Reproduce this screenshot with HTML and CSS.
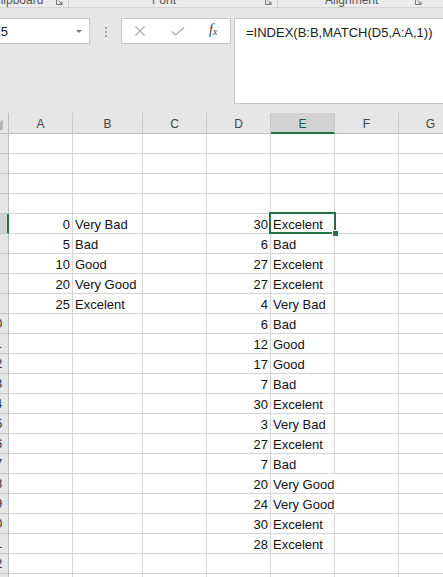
FILE: index.html
```html
<!DOCTYPE html>
<html>
<head>
<meta charset="utf-8">
<link rel="stylesheet" href="styles.css">
</head>
<body>
<div class="ribbon">
  <div class="rgroup g1"><span class="rlabel">Clipboard</span><svg class="launch" width="7" height="7" viewBox="0 0 7 7"><path d="M0.5 0.5V6.5H6.5M2.5 2.5L6 6M6 3.5V6H3.5" fill="none" stroke="#777" stroke-width="1"/></svg></div>
  <div class="rgroup g2"><span class="rlabel">Font</span><svg class="launch" width="7" height="7" viewBox="0 0 7 7"><path d="M0.5 0.5V6.5H6.5M2.5 2.5L6 6M6 3.5V6H3.5" fill="none" stroke="#777" stroke-width="1"/></svg></div>
  <div class="rgroup g3"><span class="rlabel">Alignment</span><svg class="launch" width="7" height="7" viewBox="0 0 7 7"><path d="M0.5 0.5V6.5H6.5M2.5 2.5L6 6M6 3.5V6H3.5" fill="none" stroke="#777" stroke-width="1"/></svg></div>
</div>
<div class="fbar">
  <div class="namebox"><span class="nbtext">E5</span><span class="nbarrow"></span></div>
  <div class="grip"><i></i><i></i><i></i></div>
  <div class="fbtns">
    <svg class="ico" width="12" height="10" viewBox="0 0 12 10"><path d="M1.5 0.5L10.5 9.5M10.5 0.5L1.5 9.5" stroke="#b4b4b4" stroke-width="1.3" fill="none"/></svg>
    <svg class="ico" width="14" height="9" viewBox="0 0 14 9"><path d="M1 4.5L4.5 8L13 0.5" stroke="#b4b4b4" stroke-width="1.4" fill="none"/></svg>
    <span class="fx">f<sub>x</sub></span>
  </div>
  <div class="finput">=INDEX(B:B,MATCH(D5,A:A,1))</div>
</div>
<div class="sheet">
  <div class="corner"><span class="tri"></span></div><div class="ch">A</div><div class="ch">B</div><div class="ch">C</div><div class="ch">D</div><div class="ch selh">E</div><div class="ch">F</div><div class="ch">G</div>

  <div class="rh">1</div><div class="c"></div><div class="c"></div><div class="c"></div><div class="c"></div><div class="c"></div><div class="c"></div><div class="c"></div>
  <div class="rh">2</div><div class="c"></div><div class="c"></div><div class="c"></div><div class="c"></div><div class="c"></div><div class="c"></div><div class="c"></div>
  <div class="rh">3</div><div class="c"></div><div class="c"></div><div class="c"></div><div class="c"></div><div class="c"></div><div class="c"></div><div class="c"></div>
  <div class="rh">4</div><div class="c"></div><div class="c"></div><div class="c"></div><div class="c"></div><div class="c"></div><div class="c"></div><div class="c"></div>
  <div class="rh selr">5</div><div class="c n">0</div><div class="c">Very Bad</div><div class="c"></div><div class="c n">30</div><div class="c active">Excelent<span class="selbox"><span class="handle"></span></span></div><div class="c"></div><div class="c"></div>
  <div class="rh">6</div><div class="c n">5</div><div class="c">Bad</div><div class="c"></div><div class="c n">6</div><div class="c">Bad</div><div class="c"></div><div class="c"></div>
  <div class="rh">7</div><div class="c n">10</div><div class="c">Good</div><div class="c"></div><div class="c n">27</div><div class="c">Excelent</div><div class="c"></div><div class="c"></div>
  <div class="rh">8</div><div class="c n">20</div><div class="c">Very Good</div><div class="c"></div><div class="c n">27</div><div class="c">Excelent</div><div class="c"></div><div class="c"></div>
  <div class="rh">9</div><div class="c n">25</div><div class="c">Excelent</div><div class="c"></div><div class="c n">4</div><div class="c">Very Bad</div><div class="c"></div><div class="c"></div>
  <div class="rh">10</div><div class="c"></div><div class="c"></div><div class="c"></div><div class="c n">6</div><div class="c">Bad</div><div class="c"></div><div class="c"></div>
  <div class="rh">11</div><div class="c"></div><div class="c"></div><div class="c"></div><div class="c n">12</div><div class="c">Good</div><div class="c"></div><div class="c"></div>
  <div class="rh">12</div><div class="c"></div><div class="c"></div><div class="c"></div><div class="c n">17</div><div class="c">Good</div><div class="c"></div><div class="c"></div>
  <div class="rh">13</div><div class="c"></div><div class="c"></div><div class="c"></div><div class="c n">7</div><div class="c">Bad</div><div class="c"></div><div class="c"></div>
  <div class="rh">14</div><div class="c"></div><div class="c"></div><div class="c"></div><div class="c n">30</div><div class="c">Excelent</div><div class="c"></div><div class="c"></div>
  <div class="rh">15</div><div class="c"></div><div class="c"></div><div class="c"></div><div class="c n">3</div><div class="c">Very Bad</div><div class="c"></div><div class="c"></div>
  <div class="rh">16</div><div class="c"></div><div class="c"></div><div class="c"></div><div class="c n">27</div><div class="c">Excelent</div><div class="c"></div><div class="c"></div>
  <div class="rh">17</div><div class="c"></div><div class="c"></div><div class="c"></div><div class="c n">7</div><div class="c">Bad</div><div class="c"></div><div class="c"></div>
  <div class="rh">18</div><div class="c"></div><div class="c"></div><div class="c"></div><div class="c n">20</div><div class="c spill">Very Good</div><div class="c"></div><div class="c"></div>
  <div class="rh">19</div><div class="c"></div><div class="c"></div><div class="c"></div><div class="c n">24</div><div class="c spill">Very Good</div><div class="c"></div><div class="c"></div>
  <div class="rh">20</div><div class="c"></div><div class="c"></div><div class="c"></div><div class="c n">30</div><div class="c">Excelent</div><div class="c"></div><div class="c"></div>
  <div class="rh">21</div><div class="c"></div><div class="c"></div><div class="c"></div><div class="c n">28</div><div class="c">Excelent</div><div class="c"></div><div class="c"></div>
  <div class="rh">22</div><div class="c"></div><div class="c"></div><div class="c"></div><div class="c"></div><div class="c"></div><div class="c"></div><div class="c"></div>
  <div class="rh">23</div><div class="c"></div><div class="c"></div><div class="c"></div><div class="c"></div><div class="c"></div><div class="c"></div><div class="c"></div>
</div>
</body>
</html>
```
FILE: styles.css
```css
html, body {
  margin: 0;
  padding: 0;
  background: #ffffff;
  overflow: hidden;
  width: 443px;
  height: 577px;
  font-family: "Liberation Sans", Arial, sans-serif;
}

.ribbon {
  height: 7px;
  background: #ececec;
  border-bottom: 1px solid #d4d4d4;
  display: flex;
  overflow: hidden;
  margin-left: -10px;
  width: 460px;
}
.rgroup {
  display: flex;
  align-items: flex-start;
  border-right: 1px solid #cfcfcf;
  height: 7px;
  box-sizing: border-box;
}
.g1 { width: 79px; padding-left: 2px; }
.g2 { width: 209px; padding-left: 83px; }
.g3 { width: 172px; padding-left: 47px; border-right: none; }
.rlabel {
  font-size: 12px;
  line-height: 12px;
  margin-top: -6px;
  color: #555;
  white-space: nowrap;
}
.launch {
  margin-left: auto;
  margin-right: 5px;
  margin-top: -2px;
}
.g3 .launch { margin-right: 28px; }

.fbar {
  background: #e6e6e6;
  height: 105px;
  box-sizing: border-box;
  padding-top: 10px;
  display: flex;
  align-items: flex-start;
}
.namebox {
  margin-left: -12px;
  width: 102px;
  height: 26px;
  box-sizing: border-box;
  background: #fff;
  border: 1px solid #c6c6c6;
  display: flex;
  align-items: flex-start;
  padding: 4px 0 0 3px;
}
.nbtext {
  font-size: 13px;
  line-height: 17px;
  color: #222;
}
.nbarrow {
  margin-left: auto;
  margin-right: 7px;
  margin-top: 7px;
  width: 0;
  height: 0;
  border-left: 3px solid transparent;
  border-right: 3px solid transparent;
  border-top: 3px solid #777;
}
.grip {
  width: 3px;
  margin-left: 15px;
  margin-top: 9px;
  display: flex;
  flex-direction: column;
  gap: 2px;
}
.grip i {
  display: block;
  width: 2px;
  height: 2px;
  background: #a8a8a8;
}
.fbtns {
  margin-left: 13px;
  width: 110px;
  height: 26px;
  box-sizing: border-box;
  background: #fff;
  border: 1px solid #c6c6c6;
  display: flex;
  align-items: center;
  padding-left: 12px;
}
.ico { display: block; }
.ico + .ico { margin-left: 25px; }
.fx {
  margin-left: 24px;
  font-family: "Liberation Serif", "Times New Roman", serif;
  font-style: italic;
  font-size: 14px;
  color: #444;
  line-height: 14px;
}
.fx sub {
  font-size: 10px;
  vertical-align: -1px;
}
.finput {
  margin-left: 3px;
  flex: 1;
  height: 86px;
  box-sizing: border-box;
  background: #fff;
  border: 1px solid #c6c6c6;
  border-right: none;
  padding: 5px 0 0 11px;
  font-size: 13px;
  line-height: 17px;
  color: #222;
  white-space: nowrap;
}

.sheet {
  display: grid;
  grid-template-columns: 26px 64px 70px 64px 64px 64px 64px 64px;
  grid-template-rows: 21px;
  grid-auto-rows: 20px;
  margin-left: -17px;
  background: #fff;
}
.corner {
  position: relative;
  background: #e6e6e6;
  border-right: 1px solid #bdbdbd;
  border-bottom: 1px solid #bdbdbd;
  box-sizing: border-box;
}
.tri {
  position: absolute;
  right: 5px;
  bottom: 3px;
  width: 0;
  height: 0;
  border-left: 11px solid transparent;
  border-bottom: 11px solid #b9b9b9;
}
.ch {
  background: #e6e6e6;
  border-right: 1px solid #c8c8c8;
  border-bottom: 1px solid #bdbdbd;
  box-sizing: border-box;
  text-align: center;
  font-size: 12px;
  line-height: 22px;
  color: #444;
}
.ch.selh {
  background: #d2d2d2;
  border-bottom: 2px solid #217346;
  color: #1e5e3a;
}
.rh {
  background: #e6e6e6;
  border-right: 1px solid #bdbdbd;
  border-bottom: 1px solid #c6c6c6;
  box-sizing: border-box;
  text-align: center;
  font-size: 12px;
  line-height: 21px;
  color: #2b2b3a;
  overflow: hidden;
}
.rh.selr {
  background: #d2d2d2;
  border-right: 2px solid #217346;
  padding-left: 1px;
}
.c {
  border-right: 1px solid #d4d4d4;
  border-bottom: 1px solid #d4d4d4;
  box-sizing: border-box;
  font-size: 13px;
  line-height: 21px;
  padding: 0 2px;
  color: #111;
  white-space: nowrap;
}
.c.n { text-align: right; }
.c.spill { border-right-color: transparent; }
.c.active { position: relative; }
.selbox {
  position: absolute;
  left: -2px;
  top: -2px;
  right: -2px;
  bottom: -1px;
  border: 2px solid #217346;
}
.handle {
  position: absolute;
  right: -5px;
  bottom: -5px;
  width: 5px;
  height: 5px;
  background: #217346;
  border: 1px solid #fff;
}
```
